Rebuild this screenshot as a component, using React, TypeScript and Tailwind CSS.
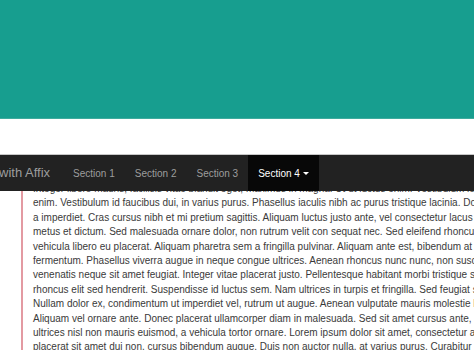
const lines = [
  'Integer libero mauris, facilisis vitae blandit eget, maximus in magna. Ut ut luctus enim. Vestibulum lorem',
  'enim. Vestibulum id faucibus dui, in varius purus. Phasellus iaculis nibh ac purus tristique lacinia. Donec',
  'a imperdiet. Cras cursus nibh et mi pretium sagittis. Aliquam luctus justo ante, vel consectetur lacus sit',
  'metus et dictum. Sed malesuada ornare dolor, non rutrum velit con sequat nec. Sed eleifend rhoncus',
  'vehicula libero eu placerat. Aliquam pharetra sem a fringilla pulvinar. Aliquam ante est, bibendum at mi',
  'fermentum. Phasellus viverra augue in neque congue ultrices. Aenean rhoncus nunc nunc, non suscipit',
  'venenatis neque sit amet feugiat. Integer vitae placerat justo. Pellentesque habitant morbi tristique senectus',
  'rhoncus elit sed hendrerit. Suspendisse id luctus sem. Nam ultrices in turpis et fringilla. Sed feugiat sem',
  'Nullam dolor ex, condimentum ut imperdiet vel, rutrum ut augue. Aenean vulputate mauris molestie lectus',
  'Aliquam vel ornare ante. Donec placerat ullamcorper diam in malesuada. Sed sit amet cursus ante, sed',
  'ultrices nisl non mauris euismod, a vehicula tortor ornare. Lorem ipsum dolor sit amet, consectetur adipiscing',
  'placerat sit amet dui non, cursus bibendum augue. Duis non auctor nulla, at varius purus. Curabitur sed',
]

const sections = ['Section 1', 'Section 2', 'Section 3']

export default function App() {
  return (
    <div className="w-full h-[350px] overflow-hidden bg-white font-['Liberation_Sans',Arial,sans-serif]">
      {/* Header band */}
      <div className="h-[119px] bg-[#179e8f] border-b border-[#3eab9e]" />
      <div className="h-[35px] bg-white" />

      {/* Affixed navbar */}
      <nav className="relative z-10 h-[37px] bg-[#222] border-t border-[#c8c8c8] flex items-stretch">
        <span className="-ml-[1px] pr-[13px] flex items-center text-[13px] text-[#9d9d9d] whitespace-nowrap">
          with Affix
        </span>
        {sections.map((s) => (
          <span key={s} className="px-[10px] flex items-center text-[10px] text-[#9d9d9d] whitespace-nowrap">
            {s}
          </span>
        ))}
        <span className="px-[10px] flex items-center gap-[3px] bg-[#080808] text-[10px] text-white whitespace-nowrap">
          Section 4
          <span className="w-0 h-0 border-l-[3px] border-r-[3px] border-t-[3px] border-l-transparent border-r-transparent border-t-white" />
        </span>
      </nav>

      {/* Content */}
      <div className="-mt-[9px] ml-[21px] pl-[10px] border-l-2 border-[#e39aa2]">
        <p className="text-[10px] leading-[14.4px] text-[#3a3a3a] whitespace-nowrap">
          {lines.map((l, i) => (
            <span key={i} className="block">
              {l}
            </span>
          ))}
        </p>
      </div>
    </div>
  )
}
